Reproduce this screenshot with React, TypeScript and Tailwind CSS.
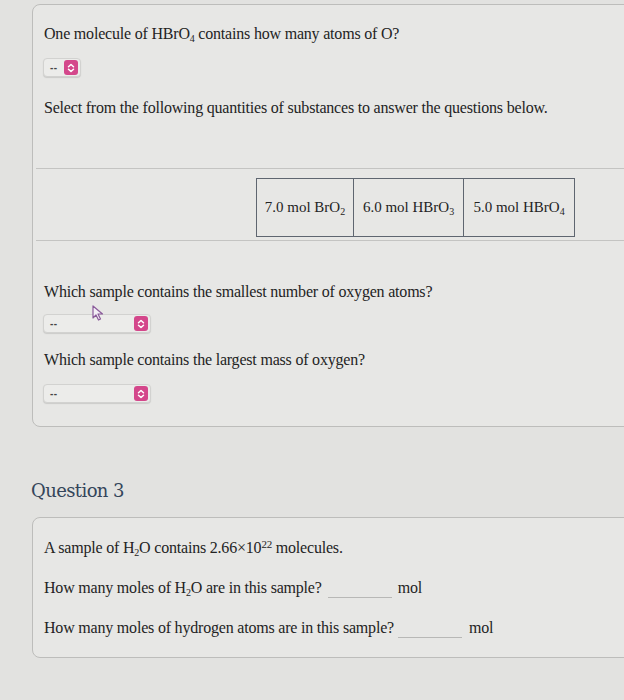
import React from "react";

const serif = { fontFamily: '"Liberation Serif", "Times New Roman", serif', letterSpacing: "-0.2px" };

function Sub({ c }: { c: string }) {
  return <sub className="text-[10px]">{c}</sub>;
}

function PinkBtn() {
  return (
    <div className="w-[14px] h-[15px] rounded-[3px] bg-[#d4478b] flex items-center justify-center">
      <svg width="8" height="10" viewBox="0 0 8 10" fill="none" stroke="white" strokeWidth="1.5" strokeLinecap="round" strokeLinejoin="round">
        <path d="M1.5 3.8 L4 1.5 L6.5 3.8" />
        <path d="M1.5 6.2 L4 8.5 L6.5 6.2" />
      </svg>
    </div>
  );
}

function Select({ wide }: { wide?: boolean }) {
  return (
    <div
      className={
        "flex items-center justify-between h-[19px] rounded-[4px] bg-[#ececea] border border-[#d2d2d0] shadow-[0_1px_1px_rgba(0,0,0,0.12)] pl-[6px] pr-[2px] " +
        (wide ? "w-[108px]" : "w-[38px]")
      }
    >
      <span className="text-[10px] font-bold text-[#444] leading-none tracking-[0.5px]" style={{ fontFamily: '"Liberation Sans", sans-serif' }}>--</span>
      <PinkBtn />
    </div>
  );
}

function Cursor() {
  return (
    <svg className="absolute left-[92px] top-[305px]" width="12" height="16" viewBox="0 0 12 16">
      <path d="M1 1 L1 13 L4 10 L6.5 15 L8.5 14 L6 9 L10.5 9 Z" fill="#f3eef6" stroke="#8a5a9a" strokeWidth="1.2" strokeLinejoin="round" />
    </svg>
  );
}

function Cell({ children, border }: { children: React.ReactNode; border?: boolean }) {
  return (
    <div className={"flex items-center justify-center " + (border ? "border-r border-[#5f6670]" : "")}>
      <span>{children}</span>
    </div>
  );
}

export default function App() {
  return (
    <div className="relative w-[624px] h-[700px] overflow-hidden bg-[#e2e2e0] text-[#232323]" style={serif}>
      <Cursor />
      <div className="pt-[4px] pl-[32px]">
        {/* Card 1 */}
        <div className="w-[620px] h-[423px] rounded-[8px] border border-[#bdbdbb] bg-[#e7e7e5] pt-[19px]">
          <div className="pl-[11px] text-[16px] leading-[20px]">
            One molecule of HBrO<Sub c="4" /> contains how many atoms of O?
          </div>
          <div className="pl-[10px] mt-[14px]">
            <Select />
          </div>
          <div className="pl-[11px] mt-[21px] text-[16px] leading-[20px]">
            Select from the following quantities of substances to answer the questions below.
          </div>
          <div className="ml-[3px] mt-[50px] border-t border-[#c4c4c2]" />
          <div className="mt-[9px] flex">
            <div className="ml-[223px] grid grid-cols-[97px_110px_110px] border border-[#5f6670] h-[59px] text-[15px]" style={{ letterSpacing: "0px" }}>
              <Cell border>
                7.0 mol BrO<Sub c="2" />
              </Cell>
              <Cell border>
                6.0 mol HBrO<Sub c="3" />
              </Cell>
              <Cell>
                5.0 mol HBrO<Sub c="4" />
              </Cell>
            </div>
          </div>
          <div className="ml-[3px] mt-[3px] border-t border-[#c4c4c2]" />
          <div className="pl-[11px] mt-[41px] text-[16px] leading-[20px]">
            Which sample contains the smallest number of oxygen atoms?
          </div>
          <div className="pl-[10px] mt-[12px]">
            <Select wide />
          </div>
          <div className="pl-[11px] mt-[17px] text-[16px] leading-[20px]">
            Which sample contains the largest mass of oxygen?
          </div>
          <div className="pl-[10px] mt-[14px]">
            <Select wide />
          </div>
        </div>

        {/* Question 3 */}
        <div
          className="mt-[52px] -ml-[1px] text-[18px] leading-[24px] text-[#34455a]"
          style={{ fontFamily: '"DejaVu Serif", serif', letterSpacing: "-0.6px" }}
        >
          Question 3
        </div>

        {/* Card 2 */}
        <div className="mt-[14px] w-[620px] h-[141px] rounded-[8px] border border-[#bdbdbb] bg-[#e7e7e5] pt-[20px] text-[16px] leading-[20px]">
          <div className="pl-[11px]">
            A sample of H<Sub c="2" />O contains 2.66×10<sup className="text-[11px]">22</sup> molecules.
          </div>
          <div className="pl-[11px] mt-[12px] flex items-end">
            <span>
              How many moles of H<Sub c="2" />O are in this sample?
            </span>
            <span className="ml-[6px] w-[64px] h-[28px] border-b border-[#b8b8b6]" />
            <span className="ml-[6px]">mol</span>
          </div>
          <div className="pl-[11px] mt-[12px] flex items-end">
            <span>How many moles of hydrogen atoms are in this sample?</span>
            <span className="ml-[4px] w-[64px] h-[28px] border-b border-[#b8b8b6]" />
            <span className="ml-[7px]">mol</span>
          </div>
        </div>
      </div>
    </div>
  );
}
